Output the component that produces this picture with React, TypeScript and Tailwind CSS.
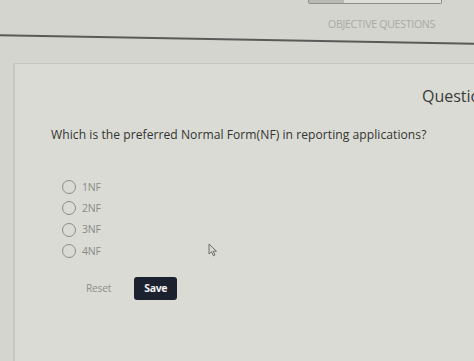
import React from "react";

export default function App() {
  const options = ["1NF", "2NF", "3NF", "4NF"];
  return (
    <div
      className="relative w-[474px] h-[361px] overflow-hidden bg-[#d4d5ce] flex flex-col"
      style={{ fontFamily: '"Open Sans", "Liberation Sans", sans-serif' }}
    >
      {/* header */}
      <div className="h-[34px] flex flex-col items-start pl-[308px]">
        <div className="w-[134px] h-[4px] flex border-b border-x border-[#8f908c] rounded-b-[2px]">
          <div className="w-[35px] bg-[#b9bab5]" />
          <div className="flex-1 bg-[#dcddd7]" />
        </div>
        <div className="mt-[15px] ml-[20px] text-[10.6px] leading-none tracking-[-0.3px] text-[#a9aaa5]">
          OBJECTIVE QUESTIONS
        </div>
      </div>
      <div className="h-[2px] w-[490px] -ml-[8px] bg-[#5a5b58] rotate-[1.05deg] origin-left" />

      {/* card */}
      <div className="mt-[27px] ml-[13px] flex-1 flex border-l-2 border-t border-[#c6c7c1] bg-[#d8d9d2]">
        <div className="ml-[5px] w-[2px] bg-[#c9cac4]" />
        <div className="flex-1 flex flex-col bg-[#dadbd4]">
          <div className="mt-[22px] pl-[402px] whitespace-nowrap overflow-hidden text-[16px] leading-[21px] text-[#3b3c3a]">
            Question
          </div>
          <div className="mt-[19px] pl-[31px] whitespace-nowrap text-[12.1px] leading-[17px] text-[#343533] tracking-[0.05px]">
            Which is the preferred Normal Form(NF) in reporting applications?
          </div>
          <div className="mt-[37px] pl-[42px] flex flex-col gap-[7.3px]">
            {options.map((o) => (
              <div key={o} className="flex items-center gap-[6px] h-[14px]">
                <div className="w-[14px] h-[14px] rounded-full border-[1.5px] border-[#8b8c88]" />
                <span className="text-[10.5px] leading-none text-[#8a8b87] tracking-[-0.2px]">{o}</span>
              </div>
            ))}
          </div>
          <div className="mt-[19px] pl-[66px] flex items-center">
            <span className="text-[10.2px] text-[#8f908c] tracking-[-0.2px]">Reset</span>
            <div className="ml-[23px] w-[43px] h-[23px] rounded-[3px] bg-[#1c2130] flex items-center justify-center text-[10.5px] font-bold text-[#f2f2f2] tracking-[-0.3px]">
              Save
            </div>
          </div>
        </div>
      </div>

      {/* mouse cursor */}
      <svg className="absolute left-[208px] top-[243px]" width="10" height="14" viewBox="0 0 10 14">
        <path d="M1 1 L1 11 L3.5 8.8 L5.5 12.8 L7 12 L5.2 8.2 L8.5 8.2 Z" fill="#d6d7d0" stroke="#6d6e6a" strokeWidth="1" strokeLinejoin="round" />
      </svg>
    </div>
  );
}
